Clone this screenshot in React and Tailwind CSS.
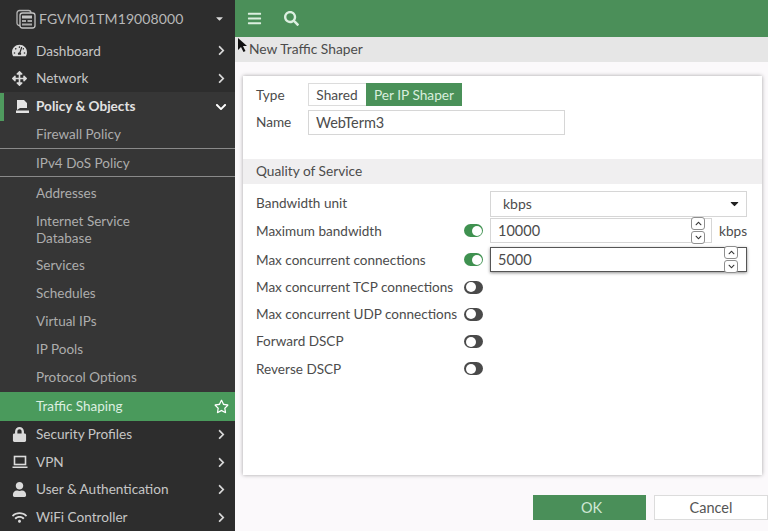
import React from "react";
import { FaTachometerAlt, FaArrowsAlt, FaLock, FaUser, FaWifi, FaSearch, FaBars, FaRegStar, FaChevronRight, FaChevronDown, FaChevronUp, FaCaretDown } from "react-icons/fa";

const Chevron = () => <FaChevronRight className="text-[11px] text-[#d8d8d8]" />;

const PolicyIcon = () => (
  <svg width="15" height="15" viewBox="0 0 15 15">
    <path d="M2 1h7l3 3v5H5L2 11z" fill="#e4e4e4" />
    <path d="M1 11.500h13V14H1z" fill="#e4e4e4" />
  </svg>
);
const VpnIcon = () => (
  <svg width="16" height="14" viewBox="0 0 16 14" fill="none">
    <rect x="2.500" y="1.500" width="11" height="8" stroke="#dcdcdc" strokeWidth="1.6" />
    <path d="M0.500 11.500h15v1.500H0.500z" fill="#dcdcdc" />
  </svg>
);
const DeviceIcon = () => (
  <svg width="20" height="20" viewBox="0 0 20 20" fill="none">
    <rect x="1" y="1.500" width="14" height="15" rx="2.500" stroke="#b5b5b5" strokeWidth="1.3" />
    <rect x="4" y="4" width="15" height="15" rx="2.500" fill="#2d2d2d" stroke="#c4c4c4" strokeWidth="1.3" />
    <path d="M6 6.500h10v3H6z" fill="#c4c4c4" />
    <path d="M6 11h4v2H6zM11.500 11h4.500v2h-4.500zM6 14.500h10v2H6z" fill="#a8a8a8" />
  </svg>
);

const TopItem = ({ icon, label }) => (
  <div className="h-[28px] flex items-center pl-[12px] pr-[8px] text-[#c6c6c6]">
    <span className="w-[24px] flex items-center text-[#dadada] text-[15px]">{icon}</span>
    <span className="flex-1 text-[13.6px]">{label}</span>
    <Chevron />
  </div>
);

const SubItem = ({ label, extra = "" }) => (
  <div className={`h-[28px] flex items-center pl-[36px] text-[13.5px] text-[#adadad] ${extra}`}>
    {label}
  </div>
);

const Toggle = ({ on }) =>
  on ? (
    <div className="w-[19px] h-[13px] rounded-full bg-[#3f9150] flex items-center justify-end pr-[1.5px]">
      <div className="w-[10px] h-[10px] rounded-full bg-white" />
    </div>
  ) : (
    <div className="w-[19px] h-[13px] rounded-full bg-[#4a4a4a] flex items-center pl-[1.5px]">
      <div className="w-[10px] h-[10px] rounded-full bg-white" />
    </div>
  );

const Spinner = () => (
  <div className="flex flex-col gap-[1px]">
    <div className="w-[14px] h-[13px] border border-[#8f8f8f] rounded-[3px] bg-white flex items-center justify-center">
      <FaChevronUp className="text-[7px] text-[#333]" />
    </div>
    <div className="w-[14px] h-[13px] border border-[#8f8f8f] rounded-[3px] bg-white flex items-center justify-center">
      <FaChevronDown className="text-[7px] text-[#333]" />
    </div>
  </div>
);

const Row = ({ label, on, extra = "", children }) => (
  <div className={`h-[27.2px] flex items-center ${extra}`}>
    <span className="w-[208px] text-[13.55px] text-[#4c4c4c] whitespace-nowrap">{label}</span>
    <span className="w-[26px]">{on !== undefined && <Toggle on={on} />}</span>
    {children}
  </div>
);

export default function App() {
  return (
    <div className="relative flex h-[531px] w-[768px] overflow-hidden font-['Lato',sans-serif] bg-[#fbf9fb]">
      <aside className="w-[235px] shrink-0 bg-[#2d2d2d] flex flex-col">
        <div className="h-[37px] shrink-0 flex items-center pl-[16px] pr-[10px]">
          <DeviceIcon />
          <span className="ml-[3px] flex-1 text-[14px] text-[#b8b8b8] tracking-[0.1px]">FGVM01TM19008000</span>
          <FaCaretDown className="text-[11px] text-[#d8d8d8]" />
        </div>
        <TopItem icon={<FaTachometerAlt />} label="Dashboard" />
        <TopItem icon={<FaArrowsAlt />} label="Network" />
        <div className="bg-[#363636] flex flex-col">
          <div className="h-[28px] mt-[0.5px] flex items-center pl-[12px] pr-[8px] border-l-[4px] border-[#4f9a5e]">
            <span className="w-[20px] -ml-[1px] flex items-center"><PolicyIcon /></span>
            <span className="flex-1 pl-[1px] text-[13.6px] font-bold text-[#e2e2e2]">Policy &amp; Objects</span>
            <FaChevronDown className="text-[12px] text-white" />
          </div>
          <SubItem label="Firewall Policy" extra="border-b border-[#8a8a8a] pb-[1px]" />
          <SubItem label="IPv4 DoS Policy" extra="border-b border-[#8a8a8a] pt-[1px]" />
          <div className="h-[2px]" />
          <SubItem label="Addresses" />
          <div className="h-[44px] flex flex-col justify-center pl-[36px] pt-[2px] text-[13.5px] leading-[17px] text-[#adadad]">
            <span>Internet Service</span>
            <span>Database</span>
          </div>
          <SubItem label="Services" />
          <SubItem label="Schedules" />
          <SubItem label="Virtual IPs" />
          <SubItem label="IP Pools" extra="pt-[1px]" />
          <div className="h-[29px] flex items-center pl-[36px] pb-[1px] text-[13.5px] text-[#adadad]">Protocol Options</div>
        </div>
        <div className="h-[29px] shrink-0 bg-[#4a9a5c] flex items-center pl-[36px] pr-[6px] text-[13.5px] text-[#dcefe0]">
          <span className="flex-1">Traffic Shaping</span>
          <FaRegStar className="text-[15px] text-white" />
        </div>
        <TopItem icon={<FaLock />} label="Security Profiles" />
        <TopItem icon={<VpnIcon />} label="VPN" />
        <TopItem icon={<FaUser />} label="User & Authentication" />
        <TopItem icon={<FaWifi />} label="WiFi Controller" />
      </aside>

      <main className="flex-1 flex flex-col min-w-0">
        <header className="h-[37px] shrink-0 bg-[#4b8f59] flex items-center pl-[12px] gap-[22px]">
          <FaBars className="text-[15px] text-[#dcefe0]" />
          <FaSearch className="text-[15px] text-[#dcefe0]" />
        </header>
        <div className="h-[25px] shrink-0 bg-[#e6e6e6] flex items-center pl-[14px] text-[13.8px] text-[#4c4c4c]">
          New Traffic Shaper
        </div>
        <div className="flex-1 flex flex-col pl-[8px] pt-[14px]">
          <section className="h-[399px] w-[519px] bg-white shadow-[0_0_4px_rgba(0,0,0,0.35)] flex flex-col">
            <div className="pl-[13px] pt-[7px]">
              <div className="flex items-center h-[23px]">
                <span className="w-[52px] pt-[1px] text-[13.6px] text-[#4c4c4c]">Type</span>
                <div className="flex h-[23px] text-[13.7px]">
                  <span className="w-[58px] border border-[#dcdcdc] border-r-0 pr-[1px] pt-[1px] flex items-center justify-center text-[#4c4c4c]">Shared</span>
                  <span className="w-[96px] pt-[1px] bg-[#4a9159] flex items-center justify-center text-[#d9eedd]">Per IP Shaper</span>
                </div>
              </div>
              <div className="flex items-center h-[25px] mt-[4px]">
                <span className="w-[52px] text-[13.6px] text-[#4c4c4c]">Name</span>
                <div className="w-[257px] h-[25px] border border-[#d6d6d6] flex items-center pl-[7px] text-[14.5px] text-[#4c4c4c]">WebTerm3</div>
              </div>
            </div>
            <div className="h-[25px] mt-[24px] bg-[#f0eff0] flex items-center pl-[13px] text-[13.7px] text-[#4c4c4c]">Quality of Service</div>
            <div className="pl-[13px] pt-[6px] flex flex-col">
              <Row label="Bandwidth unit">
                <div className="w-[257px] h-[26px] border border-[#d6d6d6] flex items-center pl-[12px] pr-[5px] text-[14px] text-[#4c4c4c]">
                  <span className="flex-1">kbps</span>
                  <FaCaretDown className="text-[13px] text-[#222]" />
                </div>
              </Row>
              <Row label="Maximum bandwidth" on={true}>
                <div className="w-[222px] h-[25px] border border-[#d6d6d6] flex items-center pl-[7px] pr-[6px] text-[14.5px] text-[#4c4c4c]">
                  <span className="flex-1">10000</span>
                  <Spinner />
                </div>
                <span className="ml-[7px] text-[13.6px] text-[#4c4c4c]">kbps</span>
              </Row>
              <Row label="Max concurrent connections" on={true} extra="mt-[2px]">
                <div className="w-[257px] h-[25px] border border-[#555] shadow-[0_1px_3px_rgba(0,0,0,0.45)] flex items-center pl-[7px] pr-[8px] text-[14.5px] text-[#4c4c4c]">
                  <span className="flex-1">5000</span>
                  <Spinner />
                </div>
              </Row>
              <Row label="Max concurrent TCP connections" on={false} />
              <Row label="Max concurrent UDP connections" on={false} />
              <Row label="Forward DSCP" on={false} />
              <Row label="Reverse DSCP" on={false} />
            </div>
          </section>
          <div className="mt-[20px] flex pl-[290px] gap-[8px] text-[14.5px]">
            <div className="w-[113px] h-[25px] pl-[4px] bg-[#4a8f59] flex items-center justify-center text-[#cfe8d5]">OK</div>
            <div className="w-[114px] h-[25px] bg-white border border-[#dcdcdc] flex items-center justify-center text-[#555]">Cancel</div>
          </div>
        </div>
      </main>

      <svg className="absolute left-[237px] top-[37px]" width="12" height="17" viewBox="0 0 12 17">
        <path d="M1 1v12l3-3 2.500 5 2-1-2.500-5h4z" fill="#111" />
      </svg>
    </div>
  );
}
